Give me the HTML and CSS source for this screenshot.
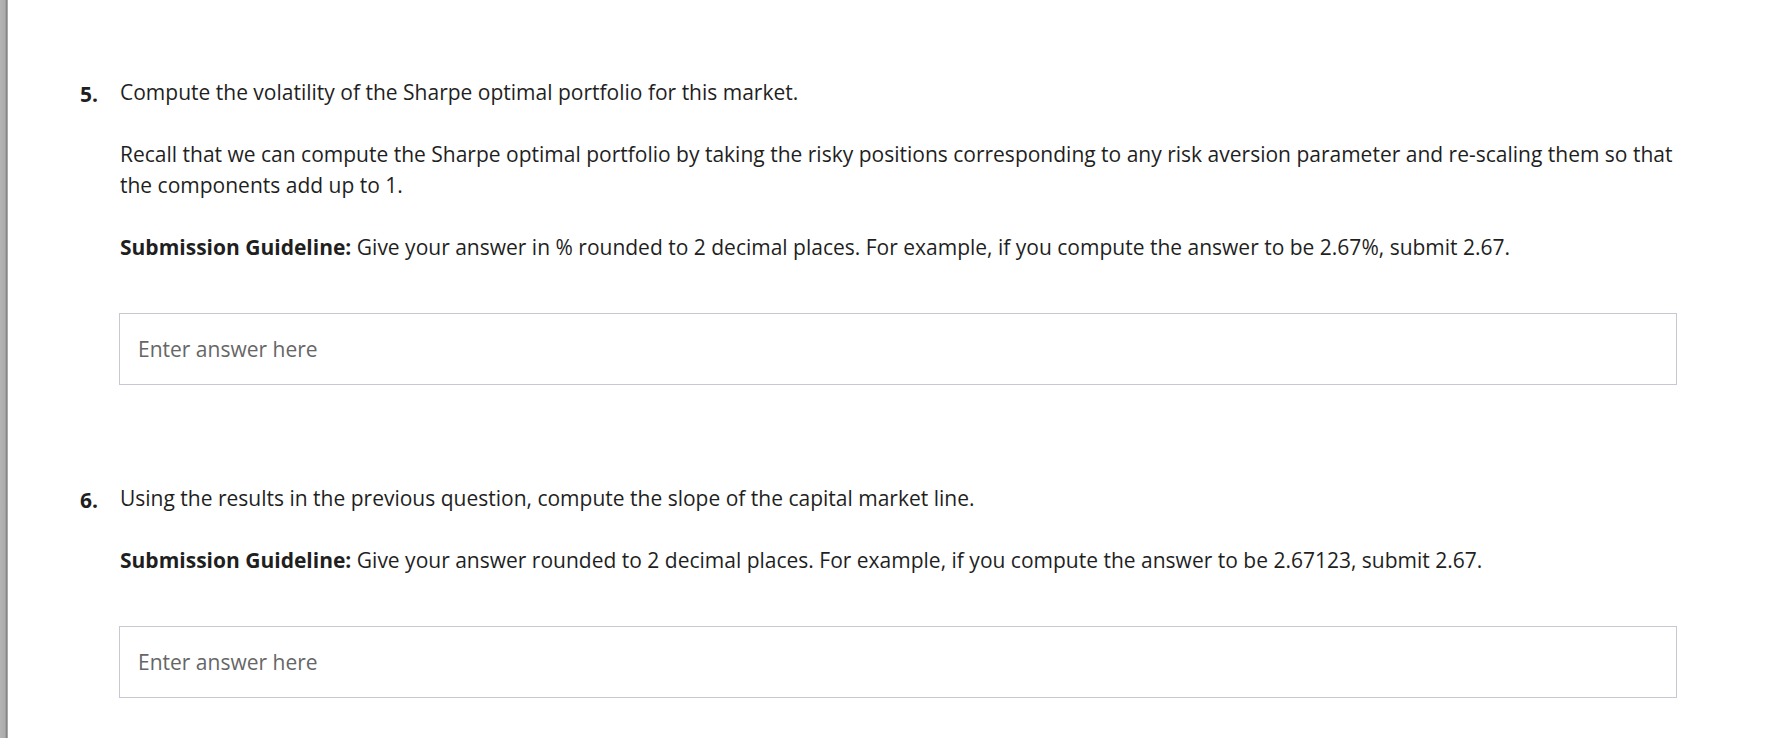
FILE: index.html
```html
<!DOCTYPE html>
<html>
<head>
<meta charset="utf-8">
<link rel="stylesheet" href="styles.css">
</head>
<body>
<div class="page">
  <div class="edge"></div>
  <main class="content">
    <section class="question q5">
      <div class="num">5.</div>
      <div class="body">
        <p>Compute the volatility of the Sharpe optimal portfolio for this market.</p>
        <p>Recall that we can compute the Sharpe optimal portfolio by taking the risky positions corresponding to any risk aversion parameter and re-scaling them so that the components add up to 1.</p>
        <p><strong>Submission Guideline:</strong> Give your answer in % rounded to 2 decimal places. For example, if you compute the answer to be 2.67%, submit 2.67.</p>
        <input class="answer" type="text" placeholder="Enter answer here">
      </div>
    </section>
    <section class="question q6">
      <div class="num">6.</div>
      <div class="body">
        <p>Using the results in the previous question, compute the slope of the capital market line.</p>
        <p><strong>Submission Guideline:</strong> Give your answer rounded to 2 decimal places. For example, if you compute the answer to be 2.67123, submit 2.67.</p>
        <input class="answer" type="text" placeholder="Enter answer here">
      </div>
    </section>
  </main>
</div>
</body>
</html>
```
FILE: styles.css
```css
html, body {
  margin: 0;
  padding: 0;
  background: #ffffff;
}
body {
  font-family: "Open Sans", "Noto Sans", sans-serif;
  font-size: 21px;
  line-height: 30.6px;
  color: #1f1f1f;
  overflow: hidden;
}
.page {
  display: flex;
  min-height: 738px;
}
.edge {
  width: 8px;
  flex: none;
  background: linear-gradient(to right, #b4b4b4 0, #acacac 5px, #7a7a7a 7px, #d8d8d8 8px);
}
.content {
  flex: 1;
  padding: 77px 93px 0 72px;
}
.question {
  display: flex;
}
.q6 {
  margin-top: 98px;
}
.num {
  width: 40px;
  flex: none;
  font-weight: 700;
  font-size: 21px;
  padding-top: 2px;
}
.body {
  flex: 1;
  display: flex;
  flex-direction: column;
}
.body p {
  margin: 0 0 31.4px 0;
}
.body p:last-of-type {
  margin-bottom: 50.5px;
}
.answer {
  box-sizing: border-box;
  margin: 0 0 0 -1px;
  height: 72px;
  border: 1px solid #c6c9d4;
  border-radius: 0;
  padding: 0 18px;
  font-family: "Open Sans", "Noto Sans", sans-serif;
  font-size: 21px;
  color: #1f1f1f;
  background: #fff;
  outline: none;
}
.answer::placeholder {
  color: #666666;
}
```
